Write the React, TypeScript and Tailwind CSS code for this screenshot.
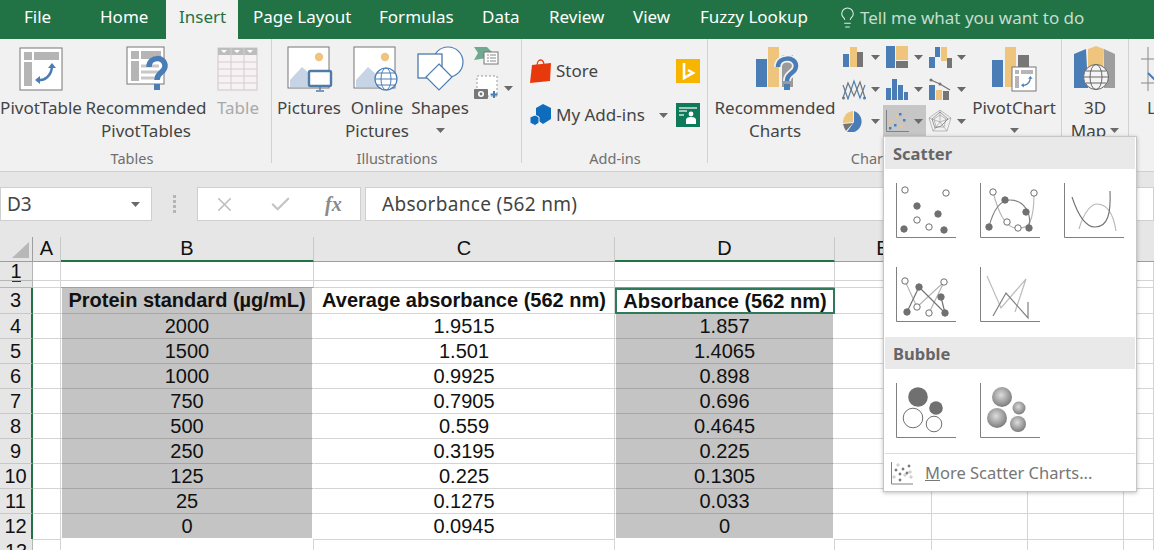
import { Check, Lightbulb, X } from "lucide-react";
import type { ReactNode } from "react";

const BLUE = "#4a7db5";
const ORANGE = "#efc57e";
const GRAY = "#757575";

function Caret({ className = "" }: { className?: string }) {
  return (
    <svg width="9" height="5" viewBox="0 0 9 5" className={className}>
      <polygon points="0,0 9,0 4.5,5" fill="#6a6a6a" />
    </svg>
  );
}

function Arrows({ x, y, s = 1 }: { x: number; y: number; s?: number }) {
  return (
    <g transform={`translate(${x} ${y}) scale(${s})`} fill="none" stroke={BLUE} strokeWidth="2.4">
      <path d="M2 17 C10 18 16 13 17 4" />
      <polygon points="13,5 17,0 21,5" fill={BLUE} stroke="none" />
      <polygon points="5,13 0,17 5,21" fill={BLUE} stroke="none" />
    </g>
  );
}

function PivotIcon() {
  return (
    <svg width="44" height="44" viewBox="0 0 44 44">
      <rect x="1" y="1" width="42" height="42" fill="#fff" stroke="#777" />
      <rect x="5" y="5" width="8" height="8" fill="#b5b5b5" />
      <rect x="15" y="5" width="25" height="8" fill="#b5b5b5" />
      <rect x="5" y="15" width="8" height="24" fill="#b5b5b5" />
      <Arrows x={16} y={16} />
    </svg>
  );
}

function RecPivotIcon() {
  return (
    <svg width="44" height="46" viewBox="0 0 44 46" className="translate-x-[2px]">
      <rect x="1" y="1" width="37" height="37" fill="#fff" stroke="#777" />
      <rect x="5" y="5" width="8" height="8" fill="#b5b5b5" />
      <rect x="15" y="5" width="20" height="8" fill="#b5b5b5" />
      <rect x="5" y="15" width="8" height="20" fill="#b5b5b5" />
      <path d="M15 20h18M15 26h18M15 32h18" stroke="#c8c8c8" strokeWidth="3" />
      <path d="M23 21 C23 10 39 10 39 20 C39 27 31 26 31 34" fill="none" stroke={BLUE} strokeWidth="5.5" />
      <rect x="28" y="38" width="6" height="6" fill={BLUE} />
    </svg>
  );
}

function TableIcon() {
  return (
    <svg width="42" height="44" viewBox="0 0 42 44">
      <rect x="1" y="1" width="39" height="42" fill="#f6f1f3" stroke="#cfc6ca" />
      <rect x="1" y="1" width="39" height="7" fill="#bdbdbd" />
      <path d="M14 1v42M27 1v42M1 15h39M1 22h39M1 29h39M1 36h39" stroke="#d6ccd0" />
      <path d="M4 3h6l-3 3zM17 3h6l-3 3zM30 3h6l-3 3z" fill="#fff" />
    </svg>
  );
}

function PictureBase() {
  return (
    <>
      <rect x="1" y="1" width="41" height="41" fill="#fff" stroke="#777" />
      <circle cx="32" cy="11" r="4.2" fill={ORANGE} />
      <path d="M3 41 L3 34 L15 21 L24 29 L32 41 Z" fill="#c6d4e6" />
    </>
  );
}

function PicturesIcon() {
  return (
    <svg width="48" height="46" viewBox="0 0 48 46" className="translate-x-[2px]">
      <PictureBase />
      <rect x="22" y="25" width="22" height="15" rx="1.5" fill="#fff" stroke="#4f7ba8" strokeWidth="2.4" />
      <path d="M33 41v3M29 45h8" stroke="#4f7ba8" strokeWidth="1.4" />
    </svg>
  );
}

function OnlinePicturesIcon() {
  return (
    <svg width="48" height="46" viewBox="0 0 48 46">
      <PictureBase />
      <circle cx="33" cy="33" r="11" fill="#fff" stroke={BLUE} strokeWidth="1.2" />
      <ellipse cx="33" cy="33" rx="5" ry="11" fill="none" stroke={BLUE} />
      <path d="M22 33h22M24 27h18M24 39h18" stroke={BLUE} />
    </svg>
  );
}

function ShapesIcon() {
  return (
    <svg width="48" height="46" viewBox="0 0 48 46" className="translate-x-[1px]">
      <circle cx="31" cy="16" r="15" fill="#fff" stroke={BLUE} strokeWidth="1.2" />
      <rect x="1" y="8" width="24" height="24" fill="#fff" stroke="#3f6f9f" strokeWidth="1.2" />
      <polygon points="22,18 35,31 22,44 9,31" fill="#fff" stroke={BLUE} strokeWidth="1.2" />
    </svg>
  );
}

function SmartArtIcon() {
  return (
    <svg width="26" height="20" viewBox="0 0 26 20">
      <polygon points="0,0 13,0 18,5 13,11 0,13 4,6" fill="#6fa98f" />
      <rect x="10" y="5" width="14" height="12" fill="#fff" stroke="#777" />
      <path d="M13 8h2M16 8h6M13 11h2M16 11h6M13 14h2M16 14h6" stroke="#888" />
    </svg>
  );
}

function ScreenshotIcon() {
  return (
    <svg width="26" height="26" viewBox="0 0 26 26">
      <rect x="3" y="1" width="20" height="20" fill="#fff" stroke="#999" strokeDasharray="2 2" />
      <rect x="0" y="14" width="14" height="10" rx="1" fill="#777" />
      <circle cx="7" cy="19" r="3" fill="#fff" />
      <circle cx="7" cy="19" r="1.4" fill="#777" />
      <path d="M20 16v7M16.5 19.5h7" stroke={BLUE} strokeWidth="2" />
    </svg>
  );
}

function StoreIcon() {
  return (
    <svg width="22" height="26" viewBox="0 0 22 26">
      <path d="M7 8 C7 0 14 0 14 8" fill="none" stroke="#e8390c" strokeWidth="1.3" />
      <polygon points="2,7 21,5 20,23 0,25" fill="#e8390c" />
    </svg>
  );
}

function AddInIcon() {
  return (
    <svg width="22" height="22" viewBox="0 0 22 22">
      <polygon points="13,0 21,4 21,15 13,20 6,15 6,4" fill="#0f6cbd" />
      <polygon points="5,11 9,13 9,19 5,21.5 0,19 0,13" fill="#0f6cbd" stroke="#f1f1f1" strokeWidth="1" />
    </svg>
  );
}

function BingIcon() {
  return (
    <svg width="24" height="24" viewBox="0 0 24 24">
      <rect width="24" height="24" fill="#f7b500" />
      <path d="M8 4v15l9-5-5-3" fill="none" stroke="#fff" strokeWidth="2.6" />
    </svg>
  );
}

function PeopleIcon() {
  return (
    <svg width="24" height="24" viewBox="0 0 24 24">
      <rect width="24" height="24" fill="#0f7a5a" />
      <path d="M3 5h18M3 8h8M3 12h5" stroke="#cfe6dc" strokeWidth="1.4" />
      <circle cx="15" cy="11" r="2.4" fill="#fff" />
      <path d="M10 21v-4q0-3 5-3t5 3v4z" fill="#fff" />
    </svg>
  );
}

function RecChartsIcon() {
  return (
    <svg width="46" height="46" viewBox="0 0 46 46" className="translate-x-[3px]">
      <rect x="27" y="9" width="11" height="32" fill="#9a9a9a" />
      <rect x="1" y="13" width="11" height="28" fill={BLUE} />
      <rect x="13" y="1" width="11" height="40" fill={ORANGE} />
      <path d="M23 21 C23 10 41 10 41 20 C41 28 32 26 32 35" fill="none" stroke="#f1f1f1" strokeWidth="8" />
      <path d="M23 21 C23 10 41 10 41 20 C41 28 32 26 32 35" fill="none" stroke={BLUE} strokeWidth="4.5" />
      <rect x="29" y="38" width="6" height="6" fill={BLUE} />
    </svg>
  );
}

function PivotChartIcon() {
  return (
    <svg width="46" height="46" viewBox="0 0 46 46">
      <rect x="1" y="14" width="11" height="27" fill={BLUE} />
      <rect x="14" y="1" width="11" height="40" fill={ORANGE} />
      <rect x="27" y="9" width="11" height="30" fill="#777" />
      <rect x="21" y="21" width="24" height="24" fill="#fff" stroke="#777" />
      <rect x="24" y="24" width="4" height="4" fill="#b5b5b5" />
      <rect x="30" y="24" width="12" height="4" fill="#b5b5b5" />
      <rect x="24" y="30" width="4" height="12" fill="#b5b5b5" />
      <Arrows x={30} y={30} s={0.55} />
    </svg>
  );
}

function MapIcon() {
  return (
    <svg width="44" height="46" viewBox="0 0 44 46">
      <polygon points="1,8 13,3 15,42 1,42" fill={BLUE} />
      <polygon points="15,3 23,0 31,3 30,34 15,34" fill={ORANGE} />
      <polygon points="31,3 42,8 42,42 31,42" fill="#9e9e9e" />
      <circle cx="23" cy="31" r="12.5" fill="#f4f4f4" stroke="#666" />
      <ellipse cx="23" cy="31" rx="6" ry="12.5" fill="none" stroke="#666" />
      <path d="M11 31h24M13 25h20M13 37h20" stroke="#666" />
    </svg>
  );
}

// the nine little chart-type buttons, 24x22 each
const miniCharts: ReactNode[] = [
  <>
    <rect x="1" y="8" width="6" height="13" fill={BLUE} />
    <rect x="8" y="1" width="7" height="20" fill={ORANGE} />
    <rect x="15" y="6" width="6" height="15" fill={GRAY} />
  </>,
  <>
    <rect x="1" y="0" width="9" height="22" fill={BLUE} />
    <rect x="11" y="0" width="12" height="14" fill={ORANGE} />
    <rect x="11" y="15" width="12" height="7" fill={GRAY} />
  </>,
  <>
    <rect x="1" y="11" width="6" height="11" fill={BLUE} />
    <rect x="7" y="1" width="5" height="10" fill={BLUE} />
    <rect x="13" y="1" width="6" height="14" fill={ORANGE} />
    <rect x="19" y="12" width="5" height="10" fill={GRAY} />
  </>,
  <>
    <path d="M1 7 L6 21 L12 3 L18 20 L23 7" fill="none" stroke="#4d7fae" strokeWidth="1.2" />
    <path d="M1 20 L6 5 L12 18 L18 4 L23 20" fill="none" stroke={GRAY} strokeWidth="1.2" />
    <circle cx="1.5" cy="20" r="1.5" fill={GRAY} />
    <circle cx="22.5" cy="20" r="1.5" fill={BLUE} />
  </>,
  <>
    <rect x="1" y="10" width="5" height="12" fill={BLUE} />
    <rect x="7" y="1" width="5" height="21" fill={BLUE} />
    <rect x="13" y="7" width="5" height="15" fill={BLUE} />
    <rect x="19" y="14" width="4" height="8" fill={BLUE} />
  </>,
  <>
    <rect x="1" y="7" width="6" height="15" fill={BLUE} />
    <rect x="8" y="12" width="6" height="10" fill={ORANGE} />
    <rect x="15" y="13" width="6" height="9" fill={GRAY} />
    <path d="M3 2 L12 6 L22 12" fill="none" stroke={GRAY} strokeWidth="1.3" />
    <circle cx="3" cy="2" r="1.5" fill={GRAY} />
    <circle cx="12" cy="6" r="1.5" fill={GRAY} />
  </>,
  <>
    <path d="M11 12 L1 13 A11 11 0 0 1 11 1 Z" fill={ORANGE} />
    <path d="M12 1 A11 11 0 1 1 5 22 L12 12 Z" fill={BLUE} />
    <path d="M1 14 L11 13 L4 21 Q2 18 1 14 Z" fill={GRAY} />
  </>,
  <>
    <path d="M1.5 0v21.5H24" fill="none" stroke="#808080" />
    <rect x="5" y="10" width="2.5" height="2.5" fill={ORANGE} />
    <rect x="10" y="5" width="2.5" height="2.5" fill={ORANGE} />
    <rect x="14" y="3" width="2.5" height="2.5" fill={BLUE} />
    <rect x="9" y="14" width="2.5" height="2.5" fill={BLUE} />
    <rect x="18" y="9" width="2.5" height="2.5" fill={BLUE} />
    <rect x="15" y="15" width="2.5" height="2.5" fill={ORANGE} />
    <rect x="4" y="17" width="2.5" height="2.5" fill={BLUE} />
  </>,
  <g fill="none" stroke="#a0a0a0" strokeWidth="0.7">
    <polygon points="12,0 23,8 19,21 5,21 1,8" />
    <polygon points="12,5 18,9 16,17 8,17 6,9" />
    <path d="M12 0v12M23 8L12 12M19 21L12 12M5 21L12 12M1 8L12 12" />
    <polygon points="12,2 20,9 13,16 7,18 4,9" stroke="#777" />
  </g>,
];

function Big({
  w,
  icon,
  lines,
  caret,
  dim,
  className = "",
}: {
  w: string;
  icon: ReactNode;
  lines: string[];
  caret?: boolean;
  dim?: boolean;
  className?: string;
}) {
  return (
    <div className={`${w} ${className} shrink-0 flex flex-col items-center pt-[6px]`}>
      <div className="h-[48px] flex items-center justify-center">{icon}</div>
      <div className={`mt-[3px] leading-[23px] text-center whitespace-nowrap ${dim ? "text-[#a9a9a9]" : "text-[#444]"}`}>
        {lines.map((l) => (
          <div key={l}>{l}</div>
        ))}
        {caret && (
          <div className="h-[23px] flex items-center justify-center">
            <Caret />
          </div>
        )}
      </div>
    </div>
  );
}

function Group({ w, label, labelClass = "", children }: { w: string; label: string; labelClass?: string; children: ReactNode }) {
  return (
    <div className={`${w} shrink-0 h-full flex flex-col relative py-0`}>
      <div className="flex flex-1 min-h-0 border-r border-[#d2d2d2] mb-[8px]">{children}</div>
      <div className={`absolute left-0 right-0 top-[108px] h-[23px] leading-[23px] text-center text-[14.5px] text-[#6f6f6f] ${labelClass}`}>
        {label}
      </div>
    </div>
  );
}

const tabs = [
  { label: "File", cls: "w-[86px] pl-[24px]" },
  { label: "Home", cls: "w-[80px] pl-[14px]" },
  { label: "Insert", cls: "w-[72px] pl-[13px] bg-[#f1f1f1] !text-[#217346]" },
  { label: "Page Layout", cls: "w-[126px] pl-[15px]" },
  { label: "Formulas", cls: "w-[103px] pl-[15px]" },
  { label: "Data", cls: "w-[67px] pl-[15px]" },
  { label: "Review", cls: "w-[84px] pl-[15px]" },
  { label: "View", cls: "w-[67px] pl-[15px]" },
  { label: "Fuzzy Lookup", cls: "w-[147px] pl-[15px]" },
];

function TabBar() {
  return (
    <div className="h-[39px] bg-[#217346] flex items-stretch text-white text-[17px]">
      {tabs.map((t) => (
        <div key={t.label} className={`${t.cls} shrink-0 leading-[34px] whitespace-nowrap`}>
          {t.label}
        </div>
      ))}
      <div className="w-[4px] shrink-0" />
      <div className="flex items-center h-[35px] text-[#c6ddd0]">
        <Lightbulb size={23} strokeWidth={1.1} className="text-[#e4efe9]" />
        <span className="ml-[1px] whitespace-nowrap">Tell me what you want to do</span>
      </div>
    </div>
  );
}

function Ribbon() {
  return (
    <div className="h-[133px] bg-[#f1f1f1] border-b border-[#d0d0d0] flex text-[17px] overflow-hidden">
      <Group w="w-[272px]" label="Tables" labelClass="pr-[8px]">
        <Big w="w-[82px]" icon={<PivotIcon />} lines={["PivotTable"]} />
        <Big w="w-[120px]" className="ml-[4px]" icon={<RecPivotIcon />} lines={["Recommended", "PivotTables"]} />
        <Big w="w-[40px]" className="ml-[12px]" icon={<TableIcon />} lines={["Table"]} dim />
      </Group>
      <Group w="w-[250px]" label="Illustrations">
        <Big w="w-[60px]" className="ml-[7px]" icon={<PicturesIcon />} lines={["Pictures"]} />
        <Big w="w-[60px]" className="ml-[8px]" icon={<OnlinePicturesIcon />} lines={["Online", "Pictures"]} />
        <Big w="w-[60px]" className="ml-[3px]" icon={<ShapesIcon />} lines={["Shapes"]} caret />
        <div className="ml-[4px] pt-[8px] flex flex-col gap-[8px]">
          <SmartArtIcon />
          <div className="flex items-center gap-[4px]">
            <ScreenshotIcon />
            <Caret />
          </div>
        </div>
      </Group>
      <Group w="w-[186px]" label="Add-ins">
        <div className="ml-[8px] w-[146px] pt-[10px] text-[#444]">
          <div className="h-[44px] flex items-center gap-[4px]">
            <StoreIcon />
            <span>Store</span>
          </div>
          <div className="h-[44px] flex items-center gap-[4px]">
            <AddInIcon />
            <span className="whitespace-nowrap">My Add-ins</span>
            <Caret className="ml-[10px]" />
          </div>
        </div>
        <div className="pt-[10px]">
          <div className="h-[44px] flex items-center">
            <BingIcon />
          </div>
          <div className="h-[44px] flex items-center">
            <PeopleIcon />
          </div>
        </div>
      </Group>
      <Group w="w-[354px]" label="Charts" labelClass="pr-[24px]">
        <Big w="w-[120px]" className="ml-[7px]" icon={<RecChartsIcon />} lines={["Recommended", "Charts"]} />
        <div className="ml-[5px] pt-[2px] grid grid-cols-[43px_43px_43px] auto-rows-[32px] h-fit">
          {miniCharts.map((c, i) => (
            <div key={i} className={`flex items-center pl-[2px] gap-[5px] ${i === 7 ? "bg-[#c6c6c6]" : ""}`}>
              <svg width="24" height="22" viewBox="0 0 24 22" className="shrink-0">
                {c}
              </svg>
              <Caret />
            </div>
          ))}
        </div>
        <Big w="w-[82px]" className="ml-[4px]" icon={<PivotChartIcon />} lines={["PivotChart"]} caret />
      </Group>
      <Group w="w-[67px]" label="">
        <div className="w-full flex flex-col items-center pt-[6px]">
          <div className="h-[48px] flex items-center">
            <MapIcon />
          </div>
          <div className="mt-[3px] leading-[23px] text-center text-[#444] whitespace-nowrap">
            <div>3D</div>
            <div className="flex items-center gap-[4px]">
              Map <Caret />
            </div>
          </div>
        </div>
      </Group>
      <div className="pl-[12px] pt-[6px] text-[#444]">
        <div className="h-[48px] flex items-center">
          <svg width="30" height="44" viewBox="0 0 30 44">
            <path d="M0 12h30M7 0v44M0 36h30" stroke="#888" fill="none" />
            <path d="M7 26l6 6 8-10" stroke={BLUE} strokeWidth="2" fill="none" />
          </svg>
        </div>
        <div className="mt-[3px] leading-[23px] pl-[6px]">Line</div>
      </div>
    </div>
  );
}

function FormulaBar() {
  return (
    <div className="h-[65px] bg-[#e6e6e6] flex items-start pt-[15px]">
      <div className="w-[152px] h-[34px] bg-white border border-[#cfcfcf] flex items-center justify-between pl-[6px] pr-[11px] text-[19px] text-[#444]">
        D3
        <Caret />
      </div>
      <div className="w-[45px] h-[34px] flex flex-col items-center justify-center gap-[2px]">
        <span className="w-[3px] h-[3px] bg-[#b5b5b5]" />
        <span className="w-[3px] h-[3px] bg-[#b5b5b5]" />
        <span className="w-[3px] h-[3px] bg-[#b5b5b5]" />
        <span className="w-[3px] h-[3px] bg-[#b5b5b5]" />
      </div>
      <div className="w-[164px] h-[34px] bg-white border border-[#cfcfcf] flex items-center pl-[15px]">
        <X size={23} strokeWidth={1.6} className="text-[#bdbdbd]" />
        <Check size={23} strokeWidth={2.4} className="text-[#c4c4c4] ml-[33px]" />
        <span className="ml-[33px] font-['Liberation_Serif',serif] italic font-bold text-[20px] text-[#8a8a8a]">fx</span>
      </div>
      <div className="ml-[4px] flex-1 h-[34px] bg-white border border-[#cfcfcf] flex items-center pl-[16px] text-[19px] tracking-[0.3px] text-[#444]">
        Absorbance (562 nm)
      </div>
    </div>
  );
}

const COLS = "grid grid-cols-[33px_28px_253px_301px_220px_97px_96px_96px_30px]";

const rows = [
  ["3", "Protein standard (µg/mL)", "Average absorbance (562 nm)", "Absorbance (562 nm)"],
  ["4", "2000", "1.9515", "1.857"],
  ["5", "1500", "1.501", "1.4065"],
  ["6", "1000", "0.9925", "0.898"],
  ["7", "750", "0.7905", "0.696"],
  ["8", "500", "0.559", "0.4645"],
  ["9", "250", "0.3195", "0.225"],
  ["10", "125", "0.225", "0.1305"],
  ["11", "25", "0.1275", "0.033"],
  ["12", "0", "0.0945", "0"],
];

const plain = "border-r border-b border-[#d4d4d4]";

function Sheet() {
  return (
    <div className="font-['Liberation_Sans',sans-serif] text-[20px] text-[#111]">
      <div className={`${COLS} h-[25px] bg-[#e6e6e6] leading-[23px] text-center`}>
        <div className="border-b border-r border-[#9e9e9e] relative">
          <svg width="18" height="16" viewBox="0 0 18 16" className="absolute left-[12px] top-[5px]">
            <polygon points="17,0 17,16 0,16" fill="#b8b8b8" />
          </svg>
        </div>
        <div className="border-b border-r border-[#9e9e9e] border-r-[#c8c8c8]">A</div>
        <div className="border-b-2 border-b-[#217346] border-r border-r-[#c8c8c8]">B</div>
        <div className="border-b border-r border-[#9e9e9e] border-r-[#c8c8c8]">C</div>
        <div className="border-b-2 border-b-[#217346] border-r border-r-[#c8c8c8]">D</div>
        <div className="border-b border-r border-[#9e9e9e] border-r-[#c8c8c8]">E</div>
        <div className="border-b border-r border-[#9e9e9e] border-r-[#c8c8c8]" />
        <div className="border-b border-r border-[#9e9e9e] border-r-[#c8c8c8]" />
        <div className="border-b border-[#9e9e9e]" />
      </div>

      <div className={`${COLS} h-[19px] bg-white overflow-hidden`}>
        <div className="bg-[#e6e6e6] border-r border-b border-[#b5b5b5] text-center leading-[18px]">1</div>
        {Array.from({ length: 8 }, (_, i) => (
          <div key={i} className={plain} />
        ))}
      </div>
      <div className={`${COLS} h-[7px] bg-white overflow-hidden`}>
        <div className="bg-[#e6e6e6] border-r border-b border-[#b5b5b5] flex justify-center">
          <span className="w-[9px] h-px bg-[#333]" />
        </div>
        <div className={plain} />
        <div className="border-r border-[#d4d4d4] border-b border-b-[#a0a0a0]" />
        <div className={plain} />
        <div className="border-r border-[#d4d4d4] border-b border-b-[#7f9f8f]" />
        {Array.from({ length: 4 }, (_, i) => (
          <div key={i} className={plain} />
        ))}
      </div>

      {rows.map((r, idx) => {
        const head = idx === 0;
        return (
          <div key={r[0]} className={`${COLS} ${head ? "h-[26px] font-bold" : "h-[25px]"} bg-white text-center leading-[24px]`}>
            <div className="bg-[#e6e6e6] border-r-2 border-r-[#217346] border-b border-b-[#c8c8c8] font-normal">{r[0]}</div>
            <div className={plain} />
            <div
              className={`bg-[#c4c4c4] border-l border-r-2 border-x-white whitespace-nowrap ${
                idx === rows.length - 1 ? "border-b-2 border-b-white" : "border-b border-b-[#a6a6a6]"
              }`}
            >
              {r[1]}
            </div>
            <div className={`${plain} whitespace-nowrap`}>{r[2]}</div>
            {head ? (
              <div className="bg-white border-2 border-[#2f7a5a] whitespace-nowrap leading-[22px]">{r[3]}</div>
            ) : (
              <div
                className={`bg-[#c4c4c4] border-l border-r-2 border-x-white whitespace-nowrap ${
                  idx === rows.length - 1 ? "border-b-2 border-b-white" : "border-b border-b-[#a6a6a6]"
                }`}
              >
                {r[3]}
              </div>
            )}
            {Array.from({ length: 4 }, (_, i) => (
              <div key={i} className={plain} />
            ))}
          </div>
        );
      })}

      <div className={`${COLS} h-[25px] bg-white`}>
        <div className="bg-[#e6e6e6] border-r border-[#b5b5b5] text-center leading-[24px]">13</div>
        {Array.from({ length: 8 }, (_, i) => (
          <div key={i} className={plain} />
        ))}
      </div>
    </div>
  );
}

function Axes({ children }: { children?: ReactNode }) {
  return (
    <svg width="60" height="55" viewBox="0 0 60 55" className="shrink-0">
      <path d="M0.5 0V54.5H60" fill="none" stroke="#808080" />
      {children}
    </svg>
  );
}

function Dot({ x, y, on }: { x: number; y: number; on?: boolean }) {
  return <circle cx={x} cy={y} r="3.2" fill={on ? "#707070" : "#fff"} stroke="#707070" strokeWidth="1" />;
}

const markerCurve = (
  <>
    <path d="M13 9 C18 28 25 46 38 45 C48 46 54 40 54 10" fill="none" stroke="#b5b5b5" strokeWidth="1.1" />
    <path d="M9 44 C14 24 22 17 30 17 C44 17 52 30 49 45" fill="none" stroke="#808080" strokeWidth="1.1" />
  </>
);

function MenuHeader({ children }: { children: ReactNode }) {
  return <div className="mx-px h-[32px] bg-[#e9e9e9] pl-[8px] leading-[33px] text-[16.5px] font-bold text-[#666]">{children}</div>;
}

function ScatterMenu() {
  return (
    <div className="absolute left-[883px] top-[136px] w-[254px] h-[356px] bg-white border border-[#c6c6c6] shadow-[0_1px_4px_rgba(0,0,0,0.25)] text-[#666] text-[16.5px]">
      <MenuHeader>Scatter</MenuHeader>
      <div className="pl-[12px] pt-[14px] grid grid-cols-[84px_84px_84px] auto-rows-[55px] gap-y-[29px] h-[153px]">
        <Axes>
          {[[9, 7], [50, 10], [21, 37], [33, 44]].map(([x, y]) => (
            <Dot key={`${x}`} x={x} y={y} />
          ))}
          {[[21, 23], [42, 31], [8, 46], [48, 47]].map(([x, y]) => (
            <Dot key={`${x}`} x={x} y={y} on />
          ))}
        </Axes>
        <Axes>
          {markerCurve}
          {[[13, 9], [54, 10], [27, 39], [38, 45]].map(([x, y]) => (
            <Dot key={`${x}`} x={x} y={y} />
          ))}
          {[[25, 17], [46, 29], [9, 44], [49, 45]].map(([x, y]) => (
            <Dot key={`${x}`} x={x} y={y} on />
          ))}
        </Axes>
        <Axes>
          <path d="M15 46 C20 28 28 21 33 21 C45 21 50 35 52 48" fill="none" stroke="#b5b5b5" strokeWidth="1.1" />
          <path d="M8 14 C14 32 22 44 31 44 C44 44 47 30 46 8" fill="none" stroke="#707070" strokeWidth="1.1" />
        </Axes>
        <Axes>
          <path d="M9 14 L21 40 L48 15 L33 46" fill="none" stroke="#b5b5b5" strokeWidth="1.2" />
          <path d="M11 45 L23 20 L49 46 L45 30" fill="none" stroke="#707070" strokeWidth="1.2" />
          {[[9, 14], [48, 15], [21, 40], [33, 46]].map(([x, y]) => (
            <Dot key={`${x}`} x={x} y={y} />
          ))}
          {[[23, 20], [45, 30], [11, 45], [49, 46]].map(([x, y]) => (
            <Dot key={`${x}`} x={x} y={y} on />
          ))}
        </Axes>
        <Axes>
          <path d="M7 9 L21 41 L46 12 L35 45" fill="none" stroke="#bcbcbc" strokeWidth="1.2" />
          <path d="M13 49 L26 26 L48 51 L48 35" fill="none" stroke="#808080" strokeWidth="1.2" />
        </Axes>
      </div>
      <div className="mt-[15px]">
        <MenuHeader>Bubble</MenuHeader>
      </div>
      <div className="pl-[12px] pt-[14px] flex gap-[24px] h-[84px]">
        <Axes>
          <circle cx="22" cy="14" r="9.8" fill="#707070" />
          <circle cx="40" cy="25" r="6.8" fill="#707070" />
          <circle cx="17" cy="35" r="9.8" fill="#fff" stroke="#707070" />
          <circle cx="38" cy="41" r="7.8" fill="#fff" stroke="#707070" />
        </Axes>
        <Axes>
          <defs>
            <radialGradient id="ball" cx="45%" cy="40%" r="60%">
              <stop offset="0" stopColor="#dcdcdc" />
              <stop offset="1" stopColor="#7c7c7c" />
            </radialGradient>
          </defs>
          <circle cx="22" cy="14" r="10" fill="url(#ball)" />
          <circle cx="39" cy="25" r="6.5" fill="url(#ball)" />
          <circle cx="17" cy="35" r="10" fill="url(#ball)" />
          <circle cx="38" cy="41" r="8" fill="url(#ball)" />
        </Axes>
      </div>
      <div className="mx-px border-t border-[#dcdcdc] h-[39px] flex items-center pl-[6px] pt-[1px]">
        <svg width="23" height="23" viewBox="0 0 23 23" className="shrink-0">
          <path d="M0.5 0V22H22" fill="none" stroke="#808080" />
          {[[7, 3, 0], [18, 4, 1], [5, 8, 1], [12, 7, 1], [19, 10, 0], [9, 12, 1], [14, 13, 0], [3, 15, 0], [9, 18, 1], [20, 15, 0], [16, 11, 1]].map(([x, y, on]) => (
            <circle key={`${x}-${y}`} cx={x} cy={y} r="1.2" fill={on ? "#707070" : "#fff"} stroke="#8a8a8a" strokeWidth="0.5" />
          ))}
        </svg>
        <span className="ml-[11px] whitespace-nowrap text-[#777]">
          <span className="underline">M</span>ore Scatter Charts...
        </span>
      </div>
    </div>
  );
}

export default function App() {
  return (
    <div className="relative w-[1154px] h-[550px] overflow-hidden bg-white font-['Noto_Sans',sans-serif]">
      <TabBar />
      <Ribbon />
      <FormulaBar />
      <Sheet />
      <ScatterMenu />
    </div>
  );
}
